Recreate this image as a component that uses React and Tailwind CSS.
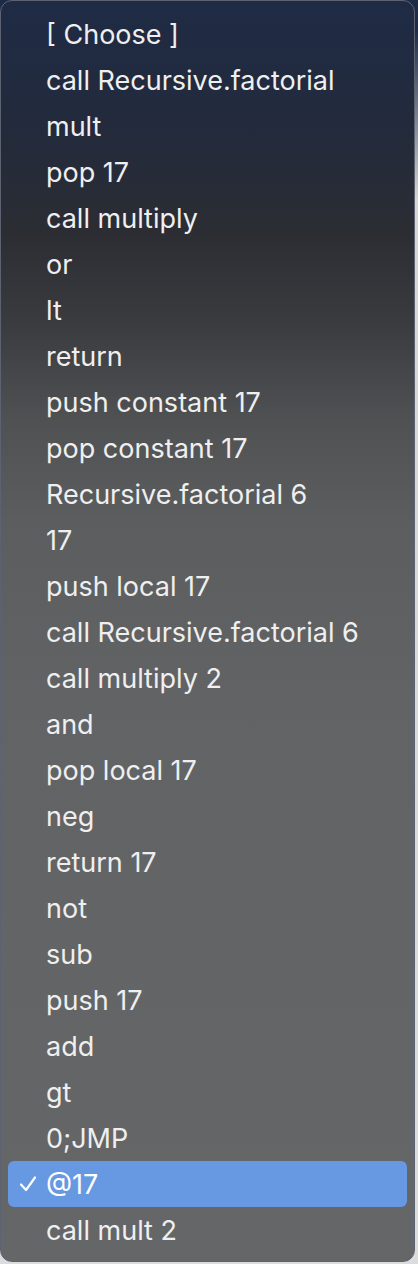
const options = [
  "[ Choose ]",
  "call Recursive.factorial",
  "mult",
  "pop 17",
  "call multiply",
  "or",
  "lt",
  "return",
  "push constant 17",
  "pop constant 17",
  "Recursive.factorial 6",
  "17",
  "push local 17",
  "call Recursive.factorial 6",
  "call multiply 2",
  "and",
  "pop local 17",
  "neg",
  "return 17",
  "not",
  "sub",
  "push 17",
  "add",
  "gt",
  "0;JMP",
  "@17",
  "call mult 2",
];

const selected = "@17";

export default function App() {
  return (
    <div className="min-h-[1264px] w-[418px] bg-[linear-gradient(to_bottom,#1f2b45_0px,#1f2b45_30px,#d6d6d6_200px,#dcdcdc_100%)] pr-[3px] pb-[2px]">
      <div
        className="h-[1262px] w-[415px] rounded-[12px] border border-[#5d6270] bg-[linear-gradient(to_bottom,#1f2b45_0px,#222a3c_120px,#2b2d33_230px,#3a3b3f_320px,#505153_420px,#5c5d5f_520px,#626365_700px,#656668_100%)] px-[7px] pt-[10px] text-[#efefef]"
        style={{ fontFamily: '"Inter", "Liberation Sans", sans-serif' }}
      >
        <ul className="flex flex-col">
          {options.map((opt) => {
            const active = opt === selected;
            return (
              <li
                key={opt}
                className={
                  "flex h-[46px] items-center rounded-[6px] text-[27px] leading-none " +
                  (active ? "bg-[#6699e1] text-white" : "")
                }
              >
                <span className="flex w-[38px] justify-center pl-[2px]">
                  {active && (
                    <svg width="18" height="18" viewBox="0 0 18 18" fill="none">
                      <path d="M2 9.5 L7 15 L16 2.5" stroke="white" strokeWidth="2.2" strokeLinecap="round" strokeLinejoin="round" />
                    </svg>
                  )}
                </span>
                <span>{opt}</span>
              </li>
            );
          })}
        </ul>
      </div>
    </div>
  );
}
